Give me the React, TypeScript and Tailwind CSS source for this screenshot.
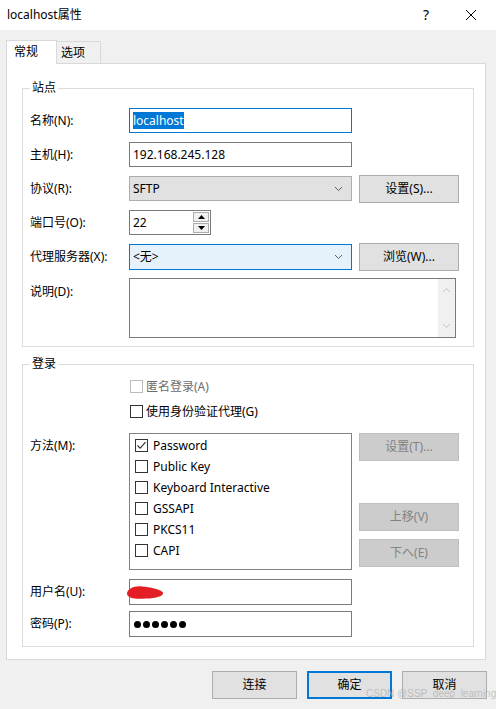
import React from 'react';

const font = { fontFamily: '"Noto Sans", "Noto Sans CJK SC", sans-serif' };

function Chevron({ up = false, color = '#606060' }: { up?: boolean; color?: string }) {
  return (
    <svg width="9" height="6" viewBox="0 0 9 6" className="shrink-0">
      <path d={up ? 'M1 5 L4.5 1.5 L8 5' : 'M1 1 L4.5 4.5 L8 1'} fill="none" stroke={color} strokeWidth="1" />
    </svg>
  );
}

function Check({ checked = false, disabled = false }: { checked?: boolean; disabled?: boolean }) {
  return (
    <span
      className={`flex h-[13px] w-[13px] shrink-0 items-center justify-center border bg-white ${
        disabled ? 'border-[#bcbcbc]' : 'border-[#333333]'
      }`}
    >
      {checked && (
        <svg width="11" height="11" viewBox="0 0 11 11">
          <path d="M1.5 5.5 L4.2 8.2 L9.5 2.2" fill="none" stroke="#333333" strokeWidth="1.2" />
        </svg>
      )}
    </span>
  );
}

function Btn({ label, disabled = false, className = '' }: { label: string; disabled?: boolean; className?: string }) {
  return (
    <button
      className={`flex h-[28px] w-[100px] items-center justify-center border text-[12px] ${
        disabled ? 'border-[#bfbfbf] bg-[#cccccc] text-[#838383]' : 'border-[#adadad] bg-[#e1e1e1] text-black'
      } ${className}`}
    >
      {label}
    </button>
  );
}

function Row({ label, children }: { label: string; children: React.ReactNode }) {
  return (
    <div className="flex h-[25px] items-center">
      <span className="w-[100px] shrink-0 pl-[1px]">{label}</span>
      {children}
    </div>
  );
}

export default function App() {
  const methods = ['Password', 'Public Key', 'Keyboard Interactive', 'GSSAPI', 'PKCS11', 'CAPI'];

  return (
    <div className="relative h-[709px] w-[496px] overflow-hidden bg-[#f0f0f0] text-[12px] text-black" style={font}>
      {/* Title bar */}
      <div className="flex h-[30px] items-center bg-white pl-[7px]">
        <span className="flex-1">localhost属性</span>
        <span className="mr-[36px] text-[14px] leading-none">?</span>
        <svg width="12" height="12" viewBox="0 0 12 12" className="mr-[19px]">
          <path d="M1 1 L11 11 M11 1 L1 11" stroke="#000" strokeWidth="1" />
        </svg>
      </div>

      {/* Tabs */}
      <div className="mt-[10px] flex h-[23px] items-end pl-[6px]">
        <div className="relative z-10 -mb-px flex h-[24px] w-[51px] items-start border-x border-t border-[#d9d9d9] bg-white pl-[7px] pt-[2px]">
          常规
        </div>
        <div className="flex h-[22px] w-[44px] items-center border-r border-t border-[#d9d9d9] bg-[#f0f0f0] pl-[4px]">
          选项
        </div>
      </div>

      {/* Panel */}
      <div className="ml-[6px] h-[597px] w-[480px] border border-[#d9d9d9] bg-white pl-[15px] pt-[16px]">
        {/* 站点 */}
        <fieldset className="w-[452px] border border-[#dcdcdc] pb-[8px] pl-[6px] pt-[12px]">
          <legend className="ml-[1px] px-[2px] leading-[16px]">站点</legend>
          <div className="flex flex-col gap-[9px]">
            <Row label="名称(N):">
              <div className="flex h-[25px] w-[223px] items-center border border-[#0078d7] pl-[3px]">
                <span className="bg-[#0078d7] leading-[17px] text-white">localhost</span>
              </div>
            </Row>
            <Row label="主机(H):">
              <div className="flex h-[25px] w-[223px] items-center border border-[#7a7a7a] pl-[3px]">192.168.245.128</div>
            </Row>
            <Row label="协议(R):">
              <div className="flex h-[25px] w-[223px] items-center border border-[#adadad] bg-[#e1e1e1] pl-[3px] pr-[8px]">
                <span className="flex-1">SFTP</span>
                <Chevron />
              </div>
              <Btn label="设置(S)..." className="ml-[7px]" />
            </Row>
            <Row label="端口号(O):">
              <div className="flex h-[25px] w-[82px] items-center border border-[#7a7a7a] pl-[3px] pr-[1px]">
                <span className="flex-1">22</span>
                <div className="flex w-[16px] flex-col gap-px">
                  <div className="flex h-[10px] items-center justify-center border border-[#adadad] bg-[#f0f0f0]">
                    <svg width="7" height="4" viewBox="0 0 7 4">
                      <path d="M0 4 L3.5 0 L7 4Z" fill="#000" />
                    </svg>
                  </div>
                  <div className="flex h-[10px] items-center justify-center border border-[#adadad] bg-[#f0f0f0]">
                    <svg width="7" height="4" viewBox="0 0 7 4">
                      <path d="M0 0 L3.5 4 L7 0Z" fill="#000" />
                    </svg>
                  </div>
                </div>
              </div>
            </Row>
            <Row label="代理服务器(X):">
              <div className="flex h-[26px] w-[223px] items-center border border-[#0078d7] bg-[#e5f1fb] pl-[3px] pr-[8px]">
                <span className="flex-1">&lt;无&gt;</span>
                <Chevron />
              </div>
              <Btn label="浏览(W)..." className="ml-[7px]" />
            </Row>
            <div className="flex h-[60px] items-start">
              <span className="w-[100px] shrink-0 pl-[1px] pt-[5px]">说明(D):</span>
              <div className="flex h-[60px] w-[327px] justify-end border border-[#7a7a7a]">
                <div className="flex w-[17px] flex-col items-center justify-between bg-[#f0f0f0] py-[8px]">
                  <Chevron up color="#c2c2c2" />
                  <Chevron color="#c2c2c2" />
                </div>
              </div>
            </div>
          </div>
        </fieldset>

        {/* 登录 */}
        <fieldset className="mt-[9px] w-[452px] border border-[#dcdcdc] pb-[9px] pl-[6px] pt-[8px]">
          <legend className="ml-[1px] px-[2px] leading-[16px]">登录</legend>
          <div className="flex h-[13px] items-center gap-[3px] pl-[101px] text-[#6d6d6d]">
            <Check disabled />
            <span>匿名登录(A)</span>
          </div>
          <div className="mt-[12px] flex h-[13px] items-center gap-[3px] pl-[101px]">
            <Check />
            <span>使用身份验证代理(G)</span>
          </div>
          <div className="mt-[15px] flex h-[137px] items-start">
            <span className="w-[100px] shrink-0 pl-[1px] pt-[4px]">方法(M):</span>
            <div className="h-[137px] w-[223px] border border-[#828282] pl-[5px] pt-[1px]">
              {methods.map((m, i) => (
                <div key={m} className="flex h-[21px] items-center gap-[5px]">
                  <Check checked={i === 0} />
                  <span>{m}</span>
                </div>
              ))}
            </div>
            <div className="ml-[7px] flex flex-col">
              <Btn label="设置(T)..." disabled />
              <Btn label="上移(V)" disabled className="mt-[42px]" />
              <Btn label="下へ(E)" disabled className="mt-[8px]" />
            </div>
          </div>
          <div className="mt-[9px] flex h-[26px] items-center">
            <span className="w-[100px] shrink-0 pl-[1px]">用户名(U):</span>
            <div className="relative h-[26px] w-[223px] border border-[#7a7a7a]">
              <svg width="40" height="18" viewBox="0 0 40 18" className="absolute left-[-5px] top-[4px]">
                <path
                  d="M2 10 C2 5 9 1.5 17 2.5 C25 3 35 5 38 8.5 C39 12 31 14.5 21 14.5 C11 15.5 3 14.5 2 10Z"
                  fill="#e31e24"
                />
              </svg>
            </div>
          </div>
          <div className="mt-[6px] flex h-[26px] items-center">
            <span className="w-[100px] shrink-0 pl-[1px]">密码(P):</span>
            <div className="flex h-[26px] w-[223px] items-center gap-[2px] border border-[#7a7a7a] pl-[4px]">
              {[0, 1, 2, 3, 4, 5].map((d) => (
                <span key={d} className="h-[7px] w-[7px] rounded-full bg-black" />
              ))}
            </div>
          </div>
        </fieldset>
      </div>

      {/* Bottom buttons */}
      <div className="mt-[11px] flex justify-end gap-[10px] pr-[9px]">
        <button className="h-[28px] w-[85px] border border-[#adadad] bg-[#e1e1e1]">连接</button>
        <button className="h-[28px] w-[85px] border-2 border-[#0078d7] bg-[#e1e1e1]">确定</button>
        <button className="h-[28px] w-[85px] border border-[#adadad] bg-[#e1e1e1]">取消</button>
      </div>

      <span
        className="absolute left-[366px] top-[687px] whitespace-nowrap text-[10px] leading-[14px] text-[#b4b4b4]/80"
        style={{ fontFamily: '"Liberation Sans", sans-serif' }}
      >
        CSDN @SSP_deep_learning
      </span>
    </div>
  );
}
